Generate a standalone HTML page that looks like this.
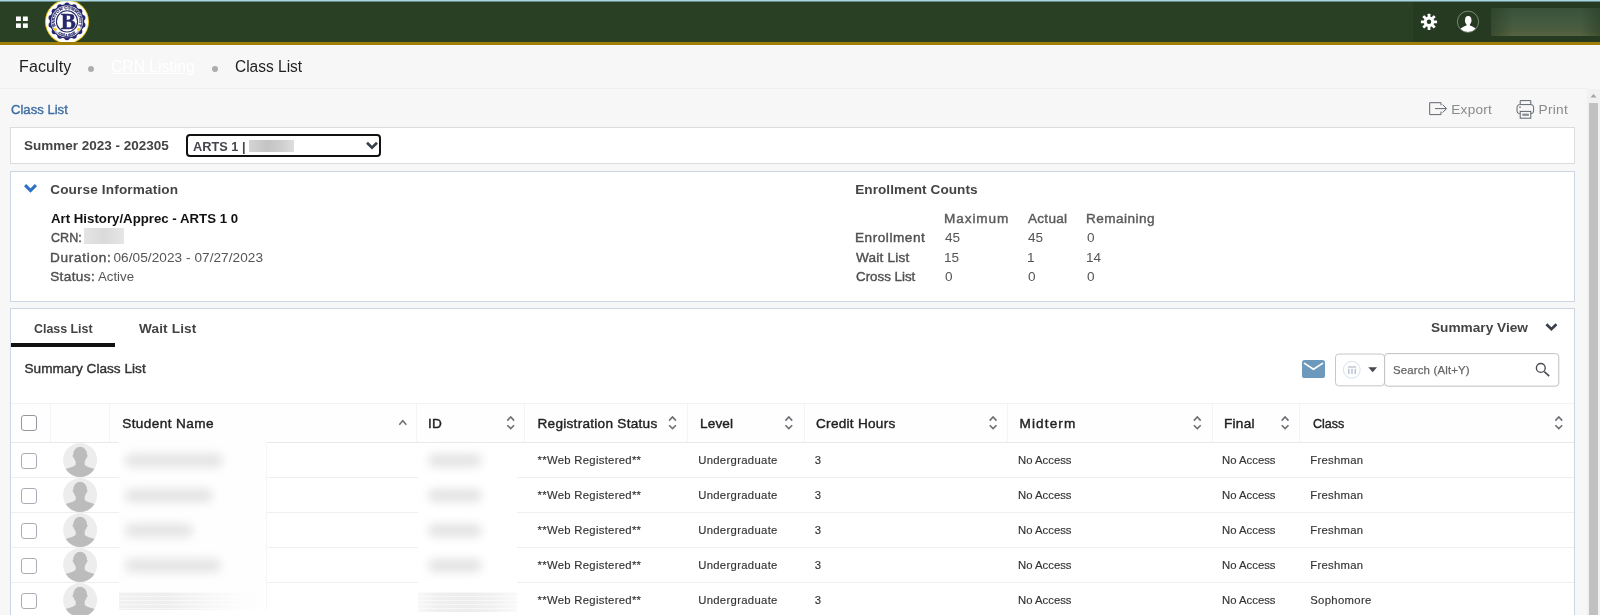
<!DOCTYPE html>
<html lang="en">
<head>
<meta charset="utf-8">
<title>Class List</title>
<style>
html,body{margin:0;padding:0;}
body{width:1600px;height:615px;overflow:hidden;background:#f7f7f7;font-family:"Liberation Sans",sans-serif;position:relative;}
#pg{position:absolute;left:0;top:0;width:1600px;height:615px;overflow:hidden;}
.a{position:absolute;}
.t{position:absolute;white-space:nowrap;line-height:1;transform-origin:0 0;}
.panel{position:absolute;background:#fff;box-sizing:border-box;}
.hl{position:absolute;height:1px;background:#efefef;}
.vl{position:absolute;width:1px;background:#ececec;}
.cb{position:absolute;width:16px;height:16px;box-sizing:border-box;border:1px solid #767676;border-radius:3px;background:#fff;}
svg{position:absolute;overflow:visible;}
</style>
</head>
<body>
<div id="pg">
<!-- top strip + header -->
<div class="a" style="left:0;top:0;width:1600px;height:2px;background:linear-gradient(180deg,#a9d6e3 0,#a9d6e3 1px,#6a8b84 1px,#6a8b84 2px);"></div>
<div class="a" style="left:0;top:2px;width:1600px;height:40px;background:#2a4024;"></div>
<div class="a" style="left:1413px;top:2px;width:187px;height:40px;background:#253a21;"></div>
<div class="a" style="left:0;top:42px;width:1600px;height:3px;background:#a07f06;"></div>
<!-- blurred user name -->
<div class="a" style="left:1491px;top:8px;width:109px;height:28px;background:linear-gradient(90deg,rgba(37,58,33,0.55) 0,rgba(37,58,33,0) 20%,rgba(37,58,33,0) 82%,rgba(37,58,33,0.5) 100%),linear-gradient(180deg,#3a513a 0%,#44593f 50%,#4c5d40 80%,#58643f 100%);"></div>
<!-- grid icon -->
<svg style="left:0;top:0" width="40" height="45"><g fill="#fff"><rect x="16" y="16.5" width="4.9" height="4.5"/><rect x="22.9" y="16.5" width="4.9" height="4.5"/><rect x="16" y="23.4" width="4.9" height="4.5"/><rect x="22.9" y="23.4" width="4.9" height="4.5"/></g></svg>
<svg style="left:0;top:0;will-change:transform" width="110" height="45" viewBox="0 0 110 45">
<defs><clipPath id="lc"><rect x="40" y="1.3" width="60" height="40.7"/></clipPath>
<path id="arcT" d="M 55.10 25.00 A 12.4 12.4 0 1 1 78.90 25.00"/>
<path id="arcB" d="M 57.80 33.30 A 15.1 15.1 0 0 0 76.20 33.30"/></defs>
<g clip-path="url(#lc)">
<circle cx="67.0" cy="21.7" r="22" fill="#eccb1c"/>
<circle cx="67.0" cy="21.7" r="21.1" fill="#fff"/>
<g fill="#27286b"><circle cx="67.00" cy="5.25" r="2.7"/><circle cx="74.01" cy="6.85" r="2.7"/><circle cx="79.63" cy="11.33" r="2.7"/><circle cx="82.75" cy="17.81" r="2.7"/><circle cx="82.75" cy="24.99" r="2.7"/><circle cx="79.63" cy="31.47" r="2.7"/><circle cx="74.01" cy="35.95" r="2.7"/><circle cx="67.00" cy="37.55" r="2.7"/><circle cx="59.99" cy="35.95" r="2.7"/><circle cx="54.37" cy="31.47" r="2.7"/><circle cx="51.25" cy="24.99" r="2.7"/><circle cx="51.25" cy="17.81" r="2.7"/><circle cx="54.37" cy="11.33" r="2.7"/><circle cx="59.99" cy="6.85" r="2.7"/><circle cx="67.0" cy="21.4" r="17.25"/></g>
<circle cx="67.0" cy="21.4" r="15.9" fill="#fff"/>
<circle cx="67.0" cy="21.4" r="15.2" fill="none" stroke="#27286b" stroke-width="0.5"/>
<circle cx="67.0" cy="21.4" r="10.6" fill="#fff" stroke="#27286b" stroke-width="1.1"/>
<text font-family="Liberation Serif, serif" font-weight="700" font-size="4.0" fill="#27286b" stroke="#27286b" stroke-width="0.2" letter-spacing="0.02"><textPath href="#arcT" startOffset="50%" text-anchor="middle">BARSTOW COMMUNITY</textPath></text>
<text font-family="Liberation Serif, serif" font-weight="700" font-size="3.8" fill="#27286b" stroke="#27286b" stroke-width="0.25" letter-spacing="0.05"><textPath href="#arcB" startOffset="50%" text-anchor="middle">COLLEGE</textPath></text>
<circle cx="55.3" cy="29.2" r="1.5" fill="#f2cf1a"/><circle cx="78.6" cy="29.2" r="1.5" fill="#f2cf1a"/>
<text x="68.2" y="29.1" text-anchor="middle" font-family="Liberation Serif, serif" font-weight="700" font-size="22.6" fill="#27286b" stroke="#27286b" stroke-width="0.5">B</text>
</g></svg>
<svg style="left:0;top:0" width="1600" height="45" viewBox="0 0 1600 45">
<g fill="#fff"><rect x="1427.60" y="13.70" width="2.8" height="4.4" rx="0.5" transform="rotate(0 1429.0 21.8)"/><rect x="1427.60" y="13.70" width="2.8" height="4.4" rx="0.5" transform="rotate(45 1429.0 21.8)"/><rect x="1427.60" y="13.70" width="2.8" height="4.4" rx="0.5" transform="rotate(90 1429.0 21.8)"/><rect x="1427.60" y="13.70" width="2.8" height="4.4" rx="0.5" transform="rotate(135 1429.0 21.8)"/><rect x="1427.60" y="13.70" width="2.8" height="4.4" rx="0.5" transform="rotate(180 1429.0 21.8)"/><rect x="1427.60" y="13.70" width="2.8" height="4.4" rx="0.5" transform="rotate(225 1429.0 21.8)"/><rect x="1427.60" y="13.70" width="2.8" height="4.4" rx="0.5" transform="rotate(270 1429.0 21.8)"/><rect x="1427.60" y="13.70" width="2.8" height="4.4" rx="0.5" transform="rotate(315 1429.0 21.8)"/></g><circle cx="1429.0" cy="21.8" r="3.75" fill="none" stroke="#fff" stroke-width="3.0"/>
<defs><clipPath id="uc"><circle cx="1468.0" cy="21.7" r="10.299999999999999"/></clipPath></defs>
<circle cx="1468.0" cy="21.7" r="10.6" fill="none" stroke="#cfd6cc" stroke-opacity="0.7" stroke-width="0.7"/>
<g clip-path="url(#uc)" fill="#fff"><ellipse cx="1468.2" cy="20.3" rx="3.25" ry="4.3"/><rect x="1466.5" y="23" width="3.4" height="4"/>
<path d="M 1459.4 33 C 1459.4 28.2 1462.5 27.2 1466.4 25.6 L 1470.0 25.6 C 1473.9 27.2 1477.0 28.2 1477.0 33 Z"/></g>
</svg>
<!-- breadcrumb bar -->
<div class="a" style="left:0;top:88px;width:1587px;height:1px;background:#efefef;"></div>
<div class="a" style="left:88px;top:65.8px;width:6px;height:6px;border-radius:50%;background:#adadad;"></div>
<div class="a" style="left:212px;top:65.8px;width:6px;height:6px;border-radius:50%;background:#adadad;"></div>
<!-- scrollbar -->
<div class="a" style="left:1587px;top:89px;width:13px;height:526px;background:#f1f1f1;"></div>
<div class="a" style="left:1588.5px;top:102.5px;width:9.5px;height:520px;background:#c1c1c1;"></div>
<svg style="left:1587px;top:89px" width="13" height="13"><path d="M3.5 8.5 L6.5 5 L9.5 8.5 Z" fill="#a3a3a3"/></svg>
<!-- panel 1 -->
<div class="panel" style="left:10px;top:127px;width:1565px;height:37px;border:1px solid #dcdcdc;"></div>
<div class="a" style="left:186px;top:134px;width:195px;height:22.7px;box-sizing:border-box;border:2px solid #111;border-radius:4px;background:#fff;"></div>
<div class="a" style="left:249px;top:140.4px;width:44.5px;height:11.5px;background:linear-gradient(90deg,#d4d4d4,#c4c4c4 40%,#d0d0d0 75%,#dedede);"></div>
<svg style="left:364px;top:140px" width="16" height="12"><path d="M3.0 2.7 L8 7.6 L13.0 2.7" fill="none" stroke="#39424b" stroke-width="2.7"/></svg>
<!-- panel 2 -->
<div class="panel" style="left:10px;top:171px;width:1565px;height:131px;border:1px solid #ccd5e3;"></div>
<svg style="left:22px;top:181px" width="18" height="14"><path d="M3.1 4.2 L8.5 9.5 L13.9 4.2" fill="none" stroke="#2f6fc4" stroke-width="3.1"/></svg>
<div class="a" style="left:84px;top:228px;width:40px;height:15.5px;background:linear-gradient(90deg,#e4e4e4,#dadada 50%,#e6e6e6);"></div>
<!-- panel 3 -->
<div class="panel" style="left:10px;top:308px;width:1565px;height:320px;border:1px solid #ccd5e3;"></div>
<div class="a" style="left:11px;top:343px;width:104px;height:3.7px;background:#111;"></div>
<svg style="left:1543px;top:320px" width="18" height="14"><path d="M3.4 4.2 L8.4 9.1 L13.4 4.2" fill="none" stroke="#3a4048" stroke-width="2.7"/></svg>
<svg style="left:0;top:0" width="1600" height="400" viewBox="0 0 1600 400">
<g fill="none" stroke="#5f6670" stroke-width="1">
<path d="M1441 105.2 V102.7 H1429.7 V114.6 H1441 V111.6"/>
<path d="M1435 108.6 H1446.3 M1442.6 104.6 L1446.5 108.6 L1442.6 112.6"/>
<path d="M1520.2 104.6 V100.6 H1530.8 V104.6"/>
<rect x="1517" y="104.6" width="16.6" height="9" rx="2.6"/>
<rect x="1520.2" y="111.4" width="10.6" height="6.8" fill="#f7f7f7"/>
</g>
<rect x="1522.3" y="113.6" width="6.6" height="2.3" fill="#8b9097"/>
<rect x="1519.2" y="106.6" width="1.6" height="1.2" fill="#5f6670"/>
<rect x="1302" y="360" width="23" height="18.1" rx="2.6" fill="#6d99bd"/>
<path d="M1304.5 363.4 L1313.5 369.3 L1322.5 363.4" fill="none" stroke="#fff" stroke-width="1.7" stroke-linecap="round" stroke-linejoin="round"/>
<rect x="1335.5" y="354" width="49" height="31.8" rx="3.2" fill="#fff" stroke="#c6c6cb" stroke-width="1"/>
<circle cx="1351.8" cy="369.8" r="8.4" fill="#fff" stroke="#d3dde7" stroke-width="0.9"/>
<g fill="#b9c4d1"><rect x="1348" y="366.3" width="8" height="1.4"/><rect x="1348" y="368.8" width="1.5" height="5.2"/><rect x="1351.25" y="368.8" width="1.5" height="5.2"/><rect x="1354.5" y="368.8" width="1.5" height="5.2"/></g>
<path d="M1368.3 367.3 H1377 L1372.65 372.2 Z" fill="#484850"/>
<rect x="1384.6" y="353.6" width="174.2" height="32.6" rx="3.2" fill="#fff" stroke="#bfbfc5" stroke-width="1"/>
<circle cx="1540.8" cy="367.9" r="4.4" fill="none" stroke="#484850" stroke-width="1.35"/>
<path d="M1544.3 371.6 L1549.2 376.2" stroke="#484850" stroke-width="1.6" fill="none"/>
</svg>
<!-- table -->
<div class="hl" style="left:11px;top:403px;width:1563px;background:#f3f3f3;"></div>
<div class="a" style="left:11px;top:404px;width:1563px;height:38px;background:#fefefe;"></div>
<div class="hl" style="left:11px;top:442px;width:1563px;background:#eaeaea;"></div>
<div class="vl" style="left:50.3px;top:404px;height:38px;background:#f3f4f6;"></div>
<div class="vl" style="left:109.3px;top:404px;height:38px;background:#f3f4f6;"></div>
<div class="vl" style="left:415.5px;top:404px;height:38px;background:#f3f4f6;"></div>
<div class="vl" style="left:524.3px;top:404px;height:38px;background:#f3f4f6;"></div>
<div class="vl" style="left:686.5px;top:404px;height:38px;background:#f3f4f6;"></div>
<div class="vl" style="left:803.6px;top:404px;height:38px;background:#f3f4f6;"></div>
<div class="vl" style="left:1007.3px;top:404px;height:38px;background:#f3f4f6;"></div>
<div class="vl" style="left:1211.7px;top:404px;height:38px;background:#f3f4f6;"></div>
<div class="vl" style="left:1299.2px;top:404px;height:38px;background:#f3f4f6;"></div>
<div class="cb" style="left:21px;top:415px;border-color:#96969f;"></div>
<div class="hl" style="left:11px;top:477px;width:1563px;"></div>
<div class="hl" style="left:11px;top:512px;width:1563px;"></div>
<div class="hl" style="left:11px;top:547px;width:1563px;"></div>
<div class="hl" style="left:11px;top:582px;width:1563px;"></div>
<div class="hl" style="left:11px;top:617px;width:1563px;"></div>
<svg style="left:0;top:0" width="1600" height="615" viewBox="0 0 1600 615"><g fill="none" stroke="#6e6e76" stroke-width="1.6"><path d="M507.3 420.6 L510.7 417 L514.1 420.6" /><path d="M507.3 425.2 L510.7 428.6 L514.1 425.2"/><path d="M669.1 420.6 L672.5 417 L675.9 420.6" /><path d="M669.1 425.2 L672.5 428.6 L675.9 425.2"/><path d="M785.4 420.6 L788.8 417 L792.1999999999999 420.6" /><path d="M785.4 425.2 L788.8 428.6 L792.1999999999999 425.2"/><path d="M989.7 420.6 L993.1 417 L996.5 420.6" /><path d="M989.7 425.2 L993.1 428.6 L996.5 425.2"/><path d="M1193.8999999999999 420.6 L1197.3 417 L1200.7 420.6" /><path d="M1193.8999999999999 425.2 L1197.3 428.6 L1200.7 425.2"/><path d="M1281.6999999999998 420.6 L1285.1 417 L1288.5 420.6" /><path d="M1281.6999999999998 425.2 L1285.1 428.6 L1288.5 425.2"/><path d="M1555.3999999999999 420.6 L1558.8 417 L1562.2 420.6" /><path d="M1555.3999999999999 425.2 L1558.8 428.6 L1562.2 425.2"/></g><path d="M399.3 424.7 L402.8 420.7 L406.3 424.7" fill="none" stroke="#6d6d75" stroke-width="1.5"/></svg>
<div class="cb" style="left:21px;top:453px;border-color:#acacb6;"></div>
<div class="cb" style="left:21px;top:488px;border-color:#acacb6;"></div>
<div class="cb" style="left:21px;top:523px;border-color:#acacb6;"></div>
<div class="cb" style="left:21px;top:558px;border-color:#acacb6;"></div>
<div class="cb" style="left:21px;top:593px;border-color:#acacb6;"></div>
<svg style="left:0;top:0" width="200" height="615" viewBox="0 0 200 615"><defs><clipPath id="avc"><circle r="17"/></clipPath></defs><g transform="translate(80.1 460.1)"><circle r="17" fill="#ededed"/><g clip-path="url(#avc)" fill="#bcbcbc"><ellipse cx="0" cy="-5.2" rx="6.9" ry="8.2"/><ellipse cx="0" cy="-4.2" rx="7.7" ry="2.2"/><path d="M-4.4 0 L-4.4 4.6 C-6 6.6 -11 7.6 -15.5 9.3 L-15.5 18 L15.5 18 L15.5 9.3 C11 7.6 6 6.6 4.6 4.6 L4.6 0 Z"/></g></g><g transform="translate(80.1 495.1)"><circle r="17" fill="#ededed"/><g clip-path="url(#avc)" fill="#bcbcbc"><ellipse cx="0" cy="-5.2" rx="6.9" ry="8.2"/><ellipse cx="0" cy="-4.2" rx="7.7" ry="2.2"/><path d="M-4.4 0 L-4.4 4.6 C-6 6.6 -11 7.6 -15.5 9.3 L-15.5 18 L15.5 18 L15.5 9.3 C11 7.6 6 6.6 4.6 4.6 L4.6 0 Z"/></g></g><g transform="translate(80.1 530.1)"><circle r="17" fill="#ededed"/><g clip-path="url(#avc)" fill="#bcbcbc"><ellipse cx="0" cy="-5.2" rx="6.9" ry="8.2"/><ellipse cx="0" cy="-4.2" rx="7.7" ry="2.2"/><path d="M-4.4 0 L-4.4 4.6 C-6 6.6 -11 7.6 -15.5 9.3 L-15.5 18 L15.5 18 L15.5 9.3 C11 7.6 6 6.6 4.6 4.6 L4.6 0 Z"/></g></g><g transform="translate(80.1 565.1)"><circle r="17" fill="#ededed"/><g clip-path="url(#avc)" fill="#bcbcbc"><ellipse cx="0" cy="-5.2" rx="6.9" ry="8.2"/><ellipse cx="0" cy="-4.2" rx="7.7" ry="2.2"/><path d="M-4.4 0 L-4.4 4.6 C-6 6.6 -11 7.6 -15.5 9.3 L-15.5 18 L15.5 18 L15.5 9.3 C11 7.6 6 6.6 4.6 4.6 L4.6 0 Z"/></g></g><g transform="translate(80.1 600.1)"><circle r="17" fill="#ededed"/><g clip-path="url(#avc)" fill="#bcbcbc"><ellipse cx="0" cy="-5.2" rx="6.9" ry="8.2"/><ellipse cx="0" cy="-4.2" rx="7.7" ry="2.2"/><path d="M-4.4 0 L-4.4 4.6 C-6 6.6 -11 7.6 -15.5 9.3 L-15.5 18 L15.5 18 L15.5 9.3 C11 7.6 6 6.6 4.6 4.6 L4.6 0 Z"/></g></g></svg>
<div class="a" style="left:119px;top:441.5px;width:147px;height:168.5px;background:#fefefe;box-shadow:1px 0 0 #f6f6f6;overflow:hidden;"><div class="a" style="left:6px;top:12px;width:98px;height:13px;background:#e3e3e3;filter:blur(5px);border-radius:7px;"></div><div class="a" style="left:6px;top:47px;width:88px;height:13px;background:#e3e3e3;filter:blur(5px);border-radius:7px;"></div><div class="a" style="left:6px;top:82px;width:68px;height:13px;background:#e3e3e3;filter:blur(5px);border-radius:7px;"></div><div class="a" style="left:6px;top:117px;width:96px;height:13px;background:#e3e3e3;filter:blur(5px);border-radius:7px;"></div><div class="a" style="left:0;top:150px;width:147px;height:18px;background:repeating-linear-gradient(180deg,rgba(255,255,255,0.55) 0,rgba(255,255,255,0.55) 1px,rgba(255,255,255,0) 1px,rgba(255,255,255,0) 4px),linear-gradient(90deg,#f1f1f1 0,#ededed 30%,#f5f5f5 55%,#fcfcfc 80%,#fefefe 100%);"></div></div>
<div class="a" style="left:418px;top:444.5px;width:98.5px;height:170.5px;background:#fff;overflow:hidden;"><div class="a" style="left:10px;top:9px;width:54px;height:13px;background:#e3e3e3;filter:blur(5px);border-radius:7px;"></div><div class="a" style="left:10px;top:44px;width:54px;height:13px;background:#e3e3e3;filter:blur(5px);border-radius:7px;"></div><div class="a" style="left:10px;top:79px;width:54px;height:13px;background:#e3e3e3;filter:blur(5px);border-radius:7px;"></div><div class="a" style="left:10px;top:114px;width:54px;height:13px;background:#e3e3e3;filter:blur(5px);border-radius:7px;"></div><div class="a" style="left:0;top:147px;width:98.5px;height:20.5px;background:repeating-linear-gradient(180deg,rgba(255,255,255,0.55) 0,rgba(255,255,255,0.55) 1px,rgba(255,255,255,0) 1px,rgba(255,255,255,0) 4px),linear-gradient(90deg,#f8f8f8 0,#efefef 20%,#ececec 50%,#f1f1f1 75%,#fafafa 100%);"></div></div>
<span class="t" style="left:19.10px;top:59px;font-size:16px;font-weight:400;color:#1e1e1e;letter-spacing:0.11px;">Faculty</span>
<span class="t" style="left:111.20px;top:59px;font-size:16px;font-weight:400;color:#ffffff;transform:scaleX(0.9805);text-decoration:underline;">CRN Listing</span>
<span class="t" style="left:235.20px;top:59px;font-size:16px;font-weight:400;color:#1e1e1e;transform:scaleX(0.9677);">Class List</span>
<span class="t" style="left:11.00px;top:103px;font-size:13.6px;font-weight:400;color:#3f6ea3;-webkit-text-stroke:0.4px #3f6ea3;transform:scaleX(0.9637);">Class List</span>
<span class="t" style="left:1451.30px;top:103px;font-size:13.6px;font-weight:400;color:#8a8a8a;letter-spacing:0.24px;">Export</span>
<span class="t" style="left:1538.50px;top:103px;font-size:13.6px;font-weight:400;color:#8a8a8a;letter-spacing:0.33px;">Print</span>
<span class="t" style="left:24.20px;top:139px;font-size:13.6px;font-weight:700;color:#444;transform:scaleX(0.9920);">Summer 2023 - 202305</span>
<span class="t" style="left:193.36px;top:140px;font-size:13.6px;font-weight:700;color:#45454d;transform:scaleX(0.9384);">ARTS 1 |</span>
<span class="t" style="left:50.20px;top:183px;font-size:13.6px;font-weight:700;color:#444;letter-spacing:0.15px;">Course Information</span>
<span class="t" style="left:51.00px;top:212px;font-size:13.6px;font-weight:700;color:#111;transform:scaleX(0.9737);">Art History/Apprec - ARTS 1 0</span>
<span class="t" style="left:51.00px;top:231px;font-size:13.6px;font-weight:400;color:#505050;-webkit-text-stroke:0.4px #505050;transform:scaleX(0.9245);">CRN:</span>
<span class="t" style="left:50.00px;top:251px;font-size:13.6px;font-weight:400;color:#505050;-webkit-text-stroke:0.4px #505050;letter-spacing:0.70px;">Duration:</span>
<span class="t" style="left:113.50px;top:251px;font-size:13.6px;font-weight:400;color:#555;letter-spacing:0.06px;">06/05/2023 - 07/27/2023</span>
<span class="t" style="left:50.20px;top:270px;font-size:13.6px;font-weight:400;color:#505050;-webkit-text-stroke:0.4px #505050;letter-spacing:0.36px;">Status:</span>
<span class="t" style="left:97.50px;top:270px;font-size:13.6px;font-weight:400;color:#555;transform:scaleX(0.9737);">Active</span>
<span class="t" style="left:855.20px;top:183px;font-size:13.6px;font-weight:700;color:#444;letter-spacing:0.05px;">Enrollment Counts</span>
<span class="t" style="left:944.00px;top:212px;font-size:13.6px;font-weight:400;color:#5a5a5a;-webkit-text-stroke:0.4px #5a5a5a;letter-spacing:0.90px;">Maximum</span>
<span class="t" style="left:1028.00px;top:212px;font-size:13.6px;font-weight:400;color:#5a5a5a;-webkit-text-stroke:0.4px #5a5a5a;letter-spacing:0.25px;">Actual</span>
<span class="t" style="left:1086.00px;top:212px;font-size:13.6px;font-weight:400;color:#5a5a5a;-webkit-text-stroke:0.4px #5a5a5a;letter-spacing:0.45px;">Remaining</span>
<span class="t" style="left:855.00px;top:231px;font-size:13.6px;font-weight:400;color:#505050;-webkit-text-stroke:0.4px #505050;letter-spacing:0.53px;">Enrollment</span>
<span class="t" style="left:945.00px;top:231px;font-size:13.6px;font-weight:400;color:#555;">45</span>
<span class="t" style="left:1028.00px;top:231px;font-size:13.6px;font-weight:400;color:#555;">45</span>
<span class="t" style="left:1087.00px;top:231px;font-size:13.6px;font-weight:400;color:#555;">0</span>
<span class="t" style="left:856.00px;top:251px;font-size:13.6px;font-weight:400;color:#505050;-webkit-text-stroke:0.4px #505050;letter-spacing:0.21px;">Wait List</span>
<span class="t" style="left:944.00px;top:251px;font-size:13.6px;font-weight:400;color:#555;">15</span>
<span class="t" style="left:1027.00px;top:251px;font-size:13.6px;font-weight:400;color:#555;">1</span>
<span class="t" style="left:1086.00px;top:251px;font-size:13.6px;font-weight:400;color:#555;">14</span>
<span class="t" style="left:856.00px;top:270px;font-size:13.6px;font-weight:400;color:#505050;-webkit-text-stroke:0.4px #505050;transform:scaleX(0.9810);">Cross List</span>
<span class="t" style="left:945.00px;top:270px;font-size:13.6px;font-weight:400;color:#555;">0</span>
<span class="t" style="left:1028.00px;top:270px;font-size:13.6px;font-weight:400;color:#555;">0</span>
<span class="t" style="left:1087.00px;top:270px;font-size:13.6px;font-weight:400;color:#555;">0</span>
<span class="t" style="left:34.00px;top:322px;font-size:13.6px;font-weight:700;color:#444;transform:scaleX(0.9120);">Class List</span>
<span class="t" style="left:139.00px;top:322px;font-size:13.6px;font-weight:700;color:#444;letter-spacing:0.15px;">Wait List</span>
<span class="t" style="left:1431.20px;top:321px;font-size:13.6px;font-weight:700;color:#444;transform:scaleX(1.0048);">Summary View</span>
<span class="t" style="left:24.50px;top:362px;font-size:13.6px;font-weight:400;color:#333;-webkit-text-stroke:0.4px #333;letter-spacing:0.02px;">Summary Class List</span>
<span class="t" style="left:1393.00px;top:365px;font-size:11.4px;font-weight:400;color:#666;-webkit-text-stroke:0.25px #666;letter-spacing:0.17px;">Search (Alt+Y)</span>
<span class="t" style="left:122.20px;top:417px;font-size:13.6px;font-weight:400;color:#222;-webkit-text-stroke:0.4px #222;letter-spacing:0.41px;">Student Name</span>
<span class="t" style="left:428.00px;top:417px;font-size:13.6px;font-weight:400;color:#222;-webkit-text-stroke:0.4px #222;letter-spacing:0.22px;">ID</span>
<span class="t" style="left:537.50px;top:417px;font-size:13.6px;font-weight:400;color:#222;-webkit-text-stroke:0.4px #222;letter-spacing:0.27px;">Registration Status</span>
<span class="t" style="left:700.00px;top:417px;font-size:13.6px;font-weight:400;color:#222;-webkit-text-stroke:0.4px #222;letter-spacing:0.13px;">Level</span>
<span class="t" style="left:816.00px;top:417px;font-size:13.6px;font-weight:400;color:#222;-webkit-text-stroke:0.4px #222;letter-spacing:0.27px;">Credit Hours</span>
<span class="t" style="left:1019.50px;top:417px;font-size:13.6px;font-weight:400;color:#222;-webkit-text-stroke:0.4px #222;letter-spacing:1.12px;">Midterm</span>
<span class="t" style="left:1224.00px;top:417px;font-size:13.6px;font-weight:400;color:#222;-webkit-text-stroke:0.4px #222;letter-spacing:0.26px;">Final</span>
<span class="t" style="left:1313.00px;top:417px;font-size:13.6px;font-weight:400;color:#222;-webkit-text-stroke:0.4px #222;transform:scaleX(0.9212);">Class</span>
<span class="t" style="left:537.50px;top:455px;font-size:11.3px;font-weight:400;color:#333;-webkit-text-stroke:0.15px #333;letter-spacing:0.30px;">**Web Registered**</span>
<span class="t" style="left:698.20px;top:455px;font-size:11.3px;font-weight:400;color:#333;-webkit-text-stroke:0.15px #333;letter-spacing:0.32px;">Undergraduate</span>
<span class="t" style="left:814.70px;top:455px;font-size:11.3px;font-weight:400;color:#333;-webkit-text-stroke:0.15px #333;">3</span>
<span class="t" style="left:1018.20px;top:455px;font-size:11.3px;font-weight:400;color:#333;-webkit-text-stroke:0.15px #333;transform:scaleX(1.0030);">No Access</span>
<span class="t" style="left:1222.20px;top:455px;font-size:11.3px;font-weight:400;color:#333;-webkit-text-stroke:0.15px #333;transform:scaleX(1.0030);">No Access</span>
<span class="t" style="left:1310.20px;top:455px;font-size:11.3px;font-weight:400;color:#333;-webkit-text-stroke:0.15px #333;letter-spacing:0.30px;">Freshman</span>
<span class="t" style="left:537.50px;top:490px;font-size:11.3px;font-weight:400;color:#333;-webkit-text-stroke:0.15px #333;letter-spacing:0.30px;">**Web Registered**</span>
<span class="t" style="left:698.20px;top:490px;font-size:11.3px;font-weight:400;color:#333;-webkit-text-stroke:0.15px #333;letter-spacing:0.32px;">Undergraduate</span>
<span class="t" style="left:814.70px;top:490px;font-size:11.3px;font-weight:400;color:#333;-webkit-text-stroke:0.15px #333;">3</span>
<span class="t" style="left:1018.20px;top:490px;font-size:11.3px;font-weight:400;color:#333;-webkit-text-stroke:0.15px #333;transform:scaleX(1.0030);">No Access</span>
<span class="t" style="left:1222.20px;top:490px;font-size:11.3px;font-weight:400;color:#333;-webkit-text-stroke:0.15px #333;transform:scaleX(1.0030);">No Access</span>
<span class="t" style="left:1310.20px;top:490px;font-size:11.3px;font-weight:400;color:#333;-webkit-text-stroke:0.15px #333;letter-spacing:0.30px;">Freshman</span>
<span class="t" style="left:537.50px;top:525px;font-size:11.3px;font-weight:400;color:#333;-webkit-text-stroke:0.15px #333;letter-spacing:0.30px;">**Web Registered**</span>
<span class="t" style="left:698.20px;top:525px;font-size:11.3px;font-weight:400;color:#333;-webkit-text-stroke:0.15px #333;letter-spacing:0.32px;">Undergraduate</span>
<span class="t" style="left:814.70px;top:525px;font-size:11.3px;font-weight:400;color:#333;-webkit-text-stroke:0.15px #333;">3</span>
<span class="t" style="left:1018.20px;top:525px;font-size:11.3px;font-weight:400;color:#333;-webkit-text-stroke:0.15px #333;transform:scaleX(1.0030);">No Access</span>
<span class="t" style="left:1222.20px;top:525px;font-size:11.3px;font-weight:400;color:#333;-webkit-text-stroke:0.15px #333;transform:scaleX(1.0030);">No Access</span>
<span class="t" style="left:1310.20px;top:525px;font-size:11.3px;font-weight:400;color:#333;-webkit-text-stroke:0.15px #333;letter-spacing:0.30px;">Freshman</span>
<span class="t" style="left:537.50px;top:560px;font-size:11.3px;font-weight:400;color:#333;-webkit-text-stroke:0.15px #333;letter-spacing:0.30px;">**Web Registered**</span>
<span class="t" style="left:698.20px;top:560px;font-size:11.3px;font-weight:400;color:#333;-webkit-text-stroke:0.15px #333;letter-spacing:0.32px;">Undergraduate</span>
<span class="t" style="left:814.70px;top:560px;font-size:11.3px;font-weight:400;color:#333;-webkit-text-stroke:0.15px #333;">3</span>
<span class="t" style="left:1018.20px;top:560px;font-size:11.3px;font-weight:400;color:#333;-webkit-text-stroke:0.15px #333;transform:scaleX(1.0030);">No Access</span>
<span class="t" style="left:1222.20px;top:560px;font-size:11.3px;font-weight:400;color:#333;-webkit-text-stroke:0.15px #333;transform:scaleX(1.0030);">No Access</span>
<span class="t" style="left:1310.20px;top:560px;font-size:11.3px;font-weight:400;color:#333;-webkit-text-stroke:0.15px #333;letter-spacing:0.30px;">Freshman</span>
<span class="t" style="left:537.50px;top:595px;font-size:11.3px;font-weight:400;color:#333;-webkit-text-stroke:0.15px #333;letter-spacing:0.30px;">**Web Registered**</span>
<span class="t" style="left:698.20px;top:595px;font-size:11.3px;font-weight:400;color:#333;-webkit-text-stroke:0.15px #333;letter-spacing:0.32px;">Undergraduate</span>
<span class="t" style="left:814.70px;top:595px;font-size:11.3px;font-weight:400;color:#333;-webkit-text-stroke:0.15px #333;">3</span>
<span class="t" style="left:1018.20px;top:595px;font-size:11.3px;font-weight:400;color:#333;-webkit-text-stroke:0.15px #333;transform:scaleX(1.0030);">No Access</span>
<span class="t" style="left:1222.20px;top:595px;font-size:11.3px;font-weight:400;color:#333;-webkit-text-stroke:0.15px #333;transform:scaleX(1.0030);">No Access</span>
<span class="t" style="left:1310.20px;top:595px;font-size:11.3px;font-weight:400;color:#333;-webkit-text-stroke:0.15px #333;letter-spacing:0.35px;">Sophomore</span>
</div>
</body>
</html>
